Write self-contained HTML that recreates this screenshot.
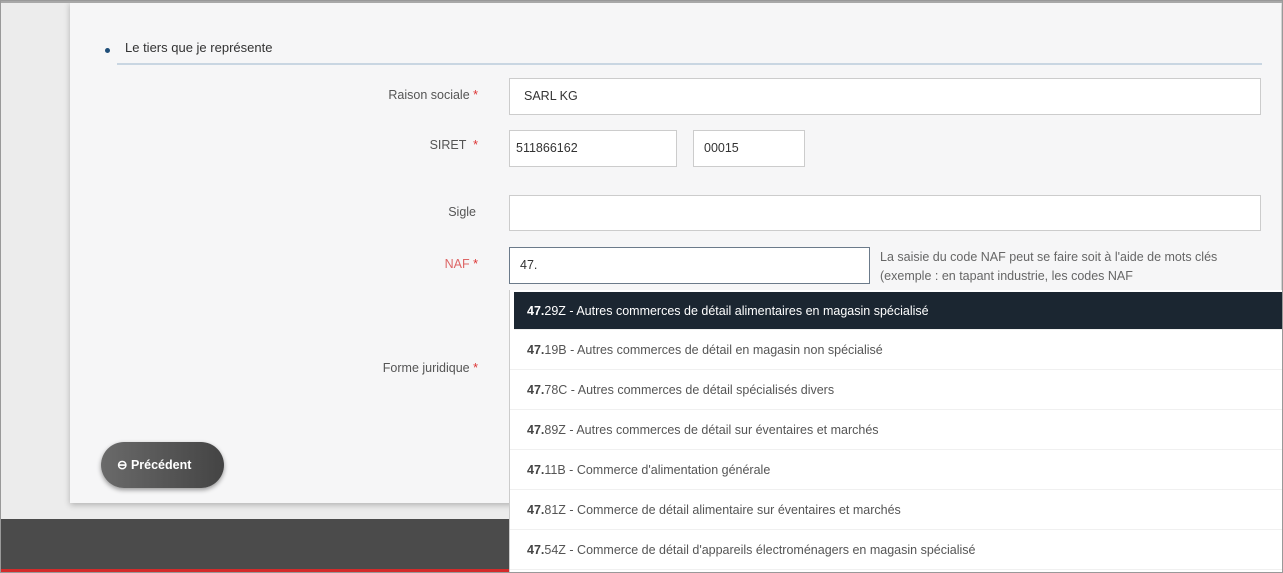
<!DOCTYPE html>
<html><head><meta charset="utf-8"><style>
*{margin:0;padding:0;box-sizing:border-box}
body{width:1283px;height:573px;overflow:hidden;background:#ececec;font-family:"Liberation Sans",sans-serif;position:relative;}
.frame{position:absolute;left:0;top:0;width:1283px;height:573px;border:1px solid #999;pointer-events:none;z-index:5}
.card{position:absolute;left:70px;top:2px;width:1211px;height:501px;background:#f6f6f7;box-shadow:0 2px 6px rgba(0,0,0,.25)}
.foot{position:absolute;left:0;top:519px;width:1283px;height:54px;background:#4b4b4b;border-bottom:4px solid #d42a2a}
.top{position:absolute;left:0;top:0;width:1283px;height:3px;background:#a8a8a8}
.title{position:absolute;left:125px;top:40px;font-size:13px;color:#333}
.bul{position:absolute;left:105px;top:48px;width:5px;height:5px;border-radius:50%;background:#1f4e79}
.line{position:absolute;left:117px;top:63px;width:1145px;height:2px;background:#c9d6e2}
.lab{position:absolute;right:805px;font-size:12.5px;color:#555;text-align:right;white-space:nowrap}
.lab b{color:#d33;font-weight:normal}
.in{position:absolute;background:#fff;border:1px solid #ccc;font-size:12.5px;color:#333;padding-left:14px;line-height:34px}
.help{position:absolute;left:850px;top:248px;width:405px;font-size:12.5px;color:#666;line-height:19px;padding-left:30px}
.btn{position:absolute;left:101px;top:442px;width:123px;height:46px;border-radius:23px;background:linear-gradient(90deg,#6a6a6a,#444);color:#fff;font-size:12.5px;font-weight:bold;line-height:46px;padding-left:16px;box-shadow:0 2px 5px rgba(0,0,0,.4)}
.dd{position:absolute;left:509px;top:290px;width:773px;height:283px;background:#fff;border-left:1px solid #ccc}
.it{height:40px;line-height:40px;padding-left:17px;font-size:12.5px;color:#555;border-bottom:1px solid #f0f0f0;white-space:nowrap}
.it b{color:#444}
.it.sel{background:#1b2631;color:#fff;margin:2px 0 0 4px;height:38px;line-height:38px;padding-left:13px}
.it.sel b{color:#fff}
</style></head><body>
<div class="card"></div>
<div class="top"></div>
<div class="bul"></div>
<div class="title">Le tiers que je représente</div>
<div class="line"></div>
<div class="lab" style="top:88px">Raison sociale <b>*</b></div>
<div class="in" style="left:509px;top:78px;width:752px;height:37px">SARL KG</div>
<div class="lab" style="top:138px">SIRET &nbsp;<b>*</b></div>
<div class="in" style="left:509px;top:130px;width:168px;height:37px;padding-left:6px">511866162</div>
<div class="in" style="left:693px;top:130px;width:112px;height:37px;padding-left:10px">00015</div>
<div class="lab" style="top:205px;right:807px">Sigle</div>
<div class="in" style="left:509px;top:195px;width:752px;height:36px"></div>
<div class="lab" style="top:257px"><span style="color:#d66">NAF</span> <b>*</b></div>
<div class="in" style="left:509px;top:247px;width:361px;height:37px;border:1px solid #6b7a8a;padding-left:10px">47.</div>
<div class="help">La saisie du code NAF peut se faire soit à l'aide de mots clés (exemple : en tapant industrie, les codes NAF</div>
<div class="lab" style="top:361px">Forme juridique <b>*</b></div>
<div class="btn">⊖ Précédent</div>
<div class="foot"></div>
<div class="dd">
<div class="it sel"><b>47.</b>29Z - Autres commerces de détail alimentaires en magasin spécialisé</div>
<div class="it"><b>47.</b>19B - Autres commerces de détail en magasin non spécialisé</div>
<div class="it"><b>47.</b>78C - Autres commerces de détail spécialisés divers</div>
<div class="it"><b>47.</b>89Z - Autres commerces de détail sur éventaires et marchés</div>
<div class="it"><b>47.</b>11B - Commerce d'alimentation générale</div>
<div class="it"><b>47.</b>81Z - Commerce de détail alimentaire sur éventaires et marchés</div>
<div class="it"><b>47.</b>54Z - Commerce de détail d'appareils électroménagers en magasin spécialisé</div>
</div>
<div class="frame"></div>
</body></html>
